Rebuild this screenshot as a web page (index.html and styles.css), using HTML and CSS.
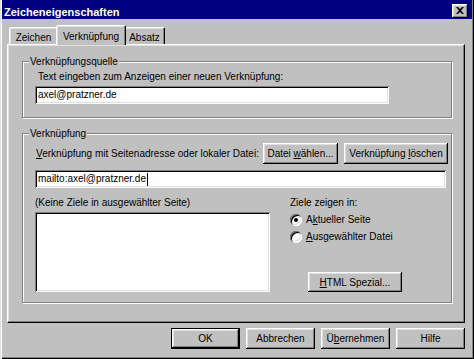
FILE: index.html
```html
<!DOCTYPE html>
<html lang="de">
<head>
<meta charset="utf-8">
<title>Zeicheneigenschaften</title>
<link rel="stylesheet" href="styles.css">
</head>
<body>
<div class="window">
  <div class="titlebar">
    <span class="title">Zeicheneigenschaften</span>
    <div class="close-btn"><svg width="8" height="7" viewBox="0 0 8 7"><path d="M0 0H2L4 2L6 0H8L5 3.5L8 7H6L4 5L2 7H0L3 3.5Z" fill="#000"/></svg></div>
  </div>
  <div class="client">
    <div class="tabs">
      <div class="tab tab-zeichen">Zeichen</div>
      <div class="tab tab-link active">Verknüpfung</div>
      <div class="tab tab-absatz">Absatz</div>
    </div>
    <div class="panel">
      <fieldset class="group group-source">
        <legend>Verknüpfungsquelle</legend>
        <div class="source-body">
          <div class="label label-source">Text eingeben zum Anzeigen einer neuen Verknüpfung:</div>
          <div class="edit edit-source">axel@pratzner.de</div>
        </div>
      </fieldset>
      <fieldset class="group group-link">
        <legend>Verknüpfung</legend>
        <div class="link-body">
          <div class="link-row">
            <span class="label label-link"><u>V</u>erknüpfung mit Seitenadresse oder lokaler Datei:</span>
            <button class="btn btn-file">Datei <u>w</u>ählen...</button>
            <button class="btn btn-delete">Verknüpfung <u>l</u>öschen</button>
          </div>
          <div class="edit edit-link">mailto:axel@pratzner.de<span class="caret"></span></div>
          <div class="targets">
            <div class="targets-list">
              <div class="label">(Keine Ziele in ausgewählter Seite)</div>
              <div class="listbox"></div>
            </div>
            <div class="targets-options">
              <div class="label">Ziele zeigen in:</div>
              <div class="radio-row"><span class="radio checked"></span><span>A<u>k</u>tueller Seite</span></div>
              <div class="radio-row"><span class="radio"></span><span><u>A</u>usgewählter Datei</span></div>
              <button class="btn btn-html"><u>H</u>TML Spezial...</button>
            </div>
          </div>
        </div>
      </fieldset>
    </div>
    <div class="dialog-buttons">
      <button class="btn btn-dialog btn-default">OK</button>
      <button class="btn btn-dialog">Abbrechen</button>
      <button class="btn btn-dialog">Ü<u>b</u>ernehmen</button>
      <button class="btn btn-dialog">Hilfe</button>
    </div>
  </div>
</div>
</body>
</html>
```

FILE: styles.css
```css
* { box-sizing: border-box; }
html, body { margin: 0; padding: 0; }
body {
  background: #c0c0c0;
  font-family: "Liberation Sans", Arial, sans-serif;
  font-size: 10px;
  color: #000;
}
.window {
  width: 474px;
  height: 359px;
  background: #c0c0c0;
  padding: 0 2px 2px 2px;
  box-shadow: inset 1px 0 #dfdfdf, inset 2px 0 #fff, inset -1px -1px #000, inset -2px -2px #808080;
  display: flex;
  flex-direction: column;
}
.titlebar {
  height: 19px;
  background: #000080;
  display: flex;
  justify-content: space-between;
  align-items: flex-start;
  flex: none;
}
.title {
  color: #fff;
  font-weight: bold;
  font-size: 11px;
  line-height: 13px;
  padding: 6px 0 0 2px;
}
.close-btn {
  width: 16px;
  height: 14px;
  margin: 4px 4px 0 0;
  background: #c0c0c0;
  box-shadow: inset -1px -1px #000, inset 1px 1px #fff, inset -2px -2px #808080, inset 2px 2px #dfdfdf;
  display: flex;
  align-items: center;
  justify-content: center;
  padding: 0 1px 1px 0;
}
.close-btn svg { display: block; }
.client {
  flex: 1;
  display: flex;
  flex-direction: column;
  padding: 6px 0 0 5px;
}
.tabs {
  display: flex;
  align-items: flex-end;
  padding-left: 2px;
  height: 19px;
  flex: none;
}
.tab {
  height: 17px;
  line-height: 13px;
  padding-top: 3px;
  text-align: center;
  border-style: solid;
  border-width: 1px 1px 0 1px;
  border-color: #fff #000 transparent #fff;
  border-radius: 2px 2px 0 0;
  box-shadow: inset -1px 0 #808080, inset 1px 1px #dfdfdf;
  background: #c0c0c0;
  white-space: nowrap;
}
.tab-zeichen { width: 49px; }
.tab-link { width: 66px; }
.tab-absatz { width: 41px; }
.tab.active {
  width: 70px;
  height: 20px;
  padding-top: 4px;
  margin: 0 -2px -1px -2px;
  position: relative;
  z-index: 1;
}
.panel {
  width: 458px;
  height: 279px;
  flex: none;
  border: 1px solid;
  border-color: #fff #000 #000 #fff;
  box-shadow: inset -1px -1px #808080, inset 1px 1px #dfdfdf;
  padding: 10px 0 0 14px;
}
.group {
  margin: 0;
  padding: 0;
  width: 430px;
  min-inline-size: 0;
  border: 1px solid #808080;
  box-shadow: inset 1px 1px #fff, 1px 1px #fff;
}
.group legend {
  padding: 0 1px;
  margin-left: 6px;
  line-height: 13px;
  background: #c0c0c0;
}
.group-link { margin-top: 9px; }
.label { line-height: 13px; white-space: nowrap; }
.source-body { padding: 2px 0 13px 12px; }
.label-source { padding-left: 3px; }
.edit {
  background: #fff;
  height: 18px;
  line-height: 18px;
  padding: 0 3px;
  white-space: nowrap;
  box-shadow: inset 1px 1px #808080, inset -1px -1px #fff, inset 2px 2px #000, inset -2px -2px #dfdfdf;
}
.edit-source { margin-top: 3px; width: 354px; }
.link-body { padding: 3px 3px 10px 12px; }
.link-row {
  display: flex;
  align-items: center;
  height: 21px;
}
.label-link { flex: 1; padding-left: 1px; }
.btn {
  font-family: "Liberation Sans", Arial, sans-serif;
  font-size: 10px;
  color: #000;
  background: #c0c0c0;
  border: none;
  padding: 0;
  margin: 0;
  height: 21px;
  white-space: nowrap;
  box-shadow: inset -1px -1px #000, inset 1px 1px #fff, inset -2px -2px #808080, inset 2px 2px #dfdfdf;
}
.btn-file { width: 75px; }
.btn-delete { width: 104px; margin-left: 6px; }
.edit-link { margin-top: 6px; margin-right: 2px; }
.caret {
  display: inline-block;
  width: 1px;
  height: 13px;
  background: #000;
  vertical-align: middle;
  margin-left: 1px;
}
.targets { display: flex; margin-top: 8px; }
.targets-list { width: 235px; }
.listbox {
  margin-top: 3px;
  height: 80px;
  background: #fff;
  box-shadow: inset 1px 1px #808080, inset -1px -1px #fff, inset 2px 2px #000, inset -2px -2px #dfdfdf;
}
.targets-options {
  margin-left: 20px;
  display: flex;
  flex-direction: column;
  align-items: flex-start;
}
.radio-row {
  display: flex;
  align-items: center;
  gap: 4px;
  height: 13px;
  margin-top: 4px;
  line-height: 13px;
  white-space: nowrap;
}
.radio {
  width: 12px;
  height: 12px;
  border-radius: 50%;
  background: #fff;
  position: relative;
  box-shadow: inset 1px 1px #808080, inset -1px -1px #fff, inset 2px 2px #000, inset -2px -2px #dfdfdf;
}
.radio.checked::after {
  content: "";
  position: absolute;
  left: 4px;
  top: 4px;
  width: 4px;
  height: 4px;
  border-radius: 50%;
  background: #000;
}
.btn-html {
  width: 94px;
  height: 20px;
  margin-top: 29px;
  margin-left: 18px;
}
.dialog-buttons {
  display: flex;
  justify-content: flex-end;
  gap: 6px;
  margin-top: 5px;
  padding-right: 7px;
}
.btn-dialog { width: 69px; }
.btn-default {
  border: 1px solid #000;
}
```
